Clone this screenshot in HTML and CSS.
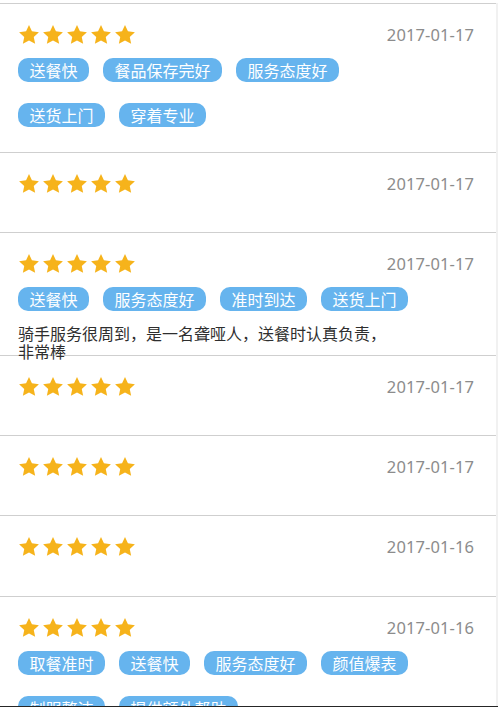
FILE: index.html
```html
<!DOCTYPE html>
<html lang="zh-CN">
<head>
<meta charset="utf-8">
<title>评价列表</title>
<link rel="stylesheet" href="styles.css">
</head>
<body>
<svg width="0" height="0" class="defs">
  <defs>
    <symbol id="star" viewBox="0 0 24 24">
      <polygon points="12,1.2 15.2,8 22.8,8.9 17.2,14.1 18.7,21.6 12,17.9 5.3,21.6 6.8,14.1 1.2,8.9 8.8,8" fill="#f6b31b"/>
    </symbol>
  </defs>
</svg>
<div class="list">
  <div class="item">
    <div class="head">
      <div class="stars"><svg class="star"><use href="#star"/></svg><svg class="star"><use href="#star"/></svg><svg class="star"><use href="#star"/></svg><svg class="star"><use href="#star"/></svg><svg class="star"><use href="#star"/></svg></div>
      <span class="date">2017-01-17</span>
    </div>
    <div class="tags">
      <span class="tag">送餐快</span><span class="tag">餐品保存完好</span><span class="tag">服务态度好</span><span class="tag">送货上门</span><span class="tag">穿着专业</span>
    </div>
  </div>
  <div class="item item--plain">
    <div class="head">
      <div class="stars"><svg class="star"><use href="#star"/></svg><svg class="star"><use href="#star"/></svg><svg class="star"><use href="#star"/></svg><svg class="star"><use href="#star"/></svg><svg class="star"><use href="#star"/></svg></div>
      <span class="date">2017-01-17</span>
    </div>
  </div>
  <div class="item item--comment">
    <div class="head">
      <div class="stars"><svg class="star"><use href="#star"/></svg><svg class="star"><use href="#star"/></svg><svg class="star"><use href="#star"/></svg><svg class="star"><use href="#star"/></svg><svg class="star"><use href="#star"/></svg></div>
      <span class="date">2017-01-17</span>
    </div>
    <div class="tags">
      <span class="tag">送餐快</span><span class="tag">服务态度好</span><span class="tag">准时到达</span><span class="tag">送货上门</span>
    </div>
    <p class="comment">骑手服务很周到，是一名聋哑人，送餐时认真负责，非常棒</p>
  </div>
  <div class="item item--plain">
    <div class="head">
      <div class="stars"><svg class="star"><use href="#star"/></svg><svg class="star"><use href="#star"/></svg><svg class="star"><use href="#star"/></svg><svg class="star"><use href="#star"/></svg><svg class="star"><use href="#star"/></svg></div>
      <span class="date">2017-01-17</span>
    </div>
  </div>
  <div class="item item--plain">
    <div class="head">
      <div class="stars"><svg class="star"><use href="#star"/></svg><svg class="star"><use href="#star"/></svg><svg class="star"><use href="#star"/></svg><svg class="star"><use href="#star"/></svg><svg class="star"><use href="#star"/></svg></div>
      <span class="date">2017-01-17</span>
    </div>
  </div>
  <div class="item item--plain item--tall">
    <div class="head">
      <div class="stars"><svg class="star"><use href="#star"/></svg><svg class="star"><use href="#star"/></svg><svg class="star"><use href="#star"/></svg><svg class="star"><use href="#star"/></svg><svg class="star"><use href="#star"/></svg></div>
      <span class="date">2017-01-16</span>
    </div>
  </div>
  <div class="item">
    <div class="head">
      <div class="stars"><svg class="star"><use href="#star"/></svg><svg class="star"><use href="#star"/></svg><svg class="star"><use href="#star"/></svg><svg class="star"><use href="#star"/></svg><svg class="star"><use href="#star"/></svg></div>
      <span class="date">2017-01-16</span>
    </div>
    <div class="tags">
      <span class="tag">取餐准时</span><span class="tag">送餐快</span><span class="tag">服务态度好</span><span class="tag">颜值爆表</span><span class="tag">制服整洁</span><span class="tag">提供额外帮助</span>
    </div>
  </div>
</div>
<div class="bottom-edge"></div>
</body>
</html>
```

FILE: styles.css
```css
html, body {
  margin: 0;
  padding: 0;
  background: #ffffff;
}

body {
  padding-top: 3px;
  font-family: "Noto Sans CJK SC", "Noto Sans", sans-serif;
  overflow: hidden;
  height: 711px;
  box-sizing: border-box;
}

.defs {
  position: absolute;
  width: 0;
  height: 0;
}

.list {
  width: 496px;
  border-right: 2px solid #f1f1f1;
}

.item {
  border-top: 1px solid #cfcfcf;
  padding: 20px 22px 25px 18px;
}

.item--plain {
  padding-bottom: 37px;
}

.item--tall {
  padding-bottom: 38px;
}

.item--comment {
  padding-bottom: 12px;
}

.head {
  display: flex;
  justify-content: space-between;
  align-items: center;
  height: 22px;
}

.stars {
  display: flex;
  gap: 2px;
}

.star {
  width: 22px;
  height: 22px;
  display: block;
}

.date {
  font-family: "Noto Sans", "Liberation Sans", sans-serif;
  font-size: 16.5px;
  color: #8c8c8c;
  line-height: 22px;
  letter-spacing: 0.1px;
}

.tags {
  display: flex;
  flex-wrap: wrap;
  column-gap: 14px;
  row-gap: 21px;
  margin-top: 12px;
  max-width: 412px;
}

.tag {
  display: inline-block;
  height: 24px;
  line-height: 24px;
  padding: 0 11.5px;
  border-radius: 10px;
  background: #66b4ee;
  color: #ffffff;
  font-size: 16px;
}

.comment {
  margin: 13px 0 0;
  height: 19px;
  max-width: 372px;
  font-size: 16px;
  line-height: 18px;
  color: #2e2e2e;
}

.bottom-edge {
  position: fixed;
  left: 0;
  right: 0;
  bottom: 0;
  height: 4px;
  background: #ffffff;
  border-top: 1px solid #262626;
}
```
